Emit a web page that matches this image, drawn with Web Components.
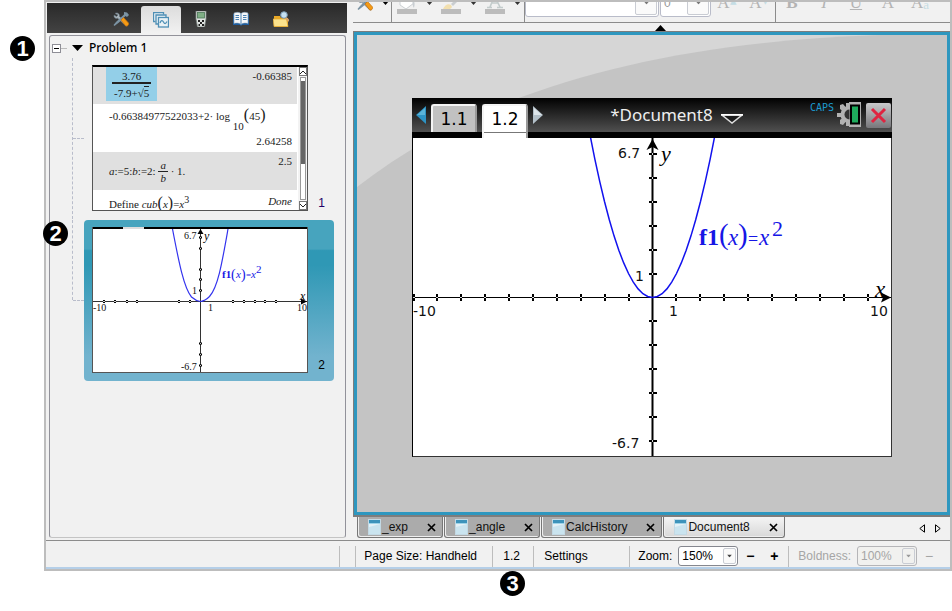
<!DOCTYPE html>
<html lang="en">
<head>
<meta charset="utf-8">
<title>Document workspace</title>
<style>
  html, body { height: 100%; margin: 0; }
  body { background: #fff; color: #000; font: 12px/16px "Liberation Sans", Arial, sans-serif; }
</style>
</head>
<body>
<doc-app></doc-app>
<script>
const define = (name, html, after) => {
  const t = document.createElement('template');
  t.innerHTML = html;
  customElements.define(name, class extends HTMLElement {
    connectedCallback() {
      if (this.shadowRoot) return;
      this.attachShadow({ mode: 'open' }).append(t.content.cloneNode(true));
      if (after) after(this, this.shadowRoot);
    }
  });
};

/* ---------- icons ---------- */
const page = `<rect x=".5" y=".5" width="12" height="15" fill="#e4f1f7" stroke="#c3d9e4"/><path d="M1 1h11v3H1z" fill="#3d93bb"/><path d="M1 4h11v1H1z" fill="#9ed3e8"/><path d="M1 8 12 5v10H1z" fill="#b9dcea" opacity=".6"/>`;
const tools = `<path d="M2 2.5c2-1.5 5 0 4.500 3l8.500 8-1.800 1.800-8.500-8C2.500 8 .5 6.500 1 4l2.500 1.500L5 4z" fill="#a9b4bb" stroke="#5f6f7a" stroke-width=".6"/><path d="m11 1 3 .6L16 4l-2 2-1.500-1L6 11.500 4 13l-2.500 2-1-1L3 11l1-1L11 3.500z" fill="#7b93a3"/><path d="m8 9 2.500-2.500 5 5.500c.8 1.500-1.200 4-3 2.800z" fill="#f59a14" stroke="#c36f09" stroke-width=".7"/>`;
const icons = {
  tools: [16, 16, tools],
  sorter: [16, 16, `<g fill="#e9f1f5" stroke="#4f8fb5" stroke-width="1.300"><path d="M10.500 2.500v-2h-10v9h2"/><path d="M13 5V3H3v9h2"/><rect x="5.500" y="5.500" width="10" height="9.500"/><path d="M7 11c1-3 2.500-3 3.500-1s2 2.500 3.500-.5" fill="none"/></g>`],
  handheld: [16, 16, `<path d="M3 0h10v8l-1.500 8h-7L3 8z" fill="#dfe3e1" stroke="#7c8580" stroke-width=".8"/><rect x="4.500" y="1.500" width="7" height="5.500" fill="#7fae85" stroke="#4d7757" stroke-width=".8"/><path d="M5 9h2v2H5zm4 0h2v2H9zm-2 2h2v2H7zm-1.500 2h1.500v2H5.500zm3.500 0h2v2H9z" fill="#222"/>`],
  book: [16, 16, `<path d="M0 3h16v11H9l-1 1-1-1H0z" fill="#1d5da0"/><path d="M1 2c3-1 5-1 7 .5C10 1 13 1 15 2v10.500c-3-.7-5-.5-7 1-2-1.500-4-1.700-7-1z" fill="#f5f7f9" stroke="#7d9ab3" stroke-width=".6"/><path d="M8 2.500v11M2.500 4.500h3.500M2.500 6.500h3.500M2.500 8.500h3.500M10 4.500h3.500M10 6.500h3.500M10 8.500h3.500" stroke="#4c83b3" fill="none"/>`],
  folder: [16, 16, `<path d="M1 5h6l1 2h7v9H1z" fill="#e8a826"/><path d="M0 8h13.500l1.500 7.500H1z" fill="#fbe28c" stroke="#e0a62e" stroke-width=".7"/><circle cx="11" cy="4" r="3.300" fill="#c5e0f2" stroke="#7896ae"/><path d="m13 7 3 3" stroke="#d7a26b" stroke-width="2"/>`],
  fill: [20, 16, `<path d="m3 3 8-4 6 6-8 6-6-4z" fill="#fff" stroke="#ccd0d3"/><path d="M15 2c3 1 3 4 2 8-2-3-1-5-2-8z" fill="#c9ced2"/><path d="M0 11h20v5H0z" fill="#bcbcbc"/>`],
  brush: [20, 16, `<path d="M10 6 16 0h4l-8 8z" fill="#c9cdd0"/><path d="M2 11c2-4 5-6 8-4l1 2c-2 3-5 3-9 2z" fill="#f2dfae"/><path d="M0 11h20v5H0z" fill="#bcbcbc"/>`],
  colour: [20, 16, `<path d="M0 11h20v5H0z" fill="#bcbcbc"/><path d="M2 9.500h5M12 9.500h6M5 9 9.500-2 15 9M6.500 5h7" fill="none" stroke="#c3cccc" stroke-width="1.600"/>`],
  down: [7, 4, `<path d="M0 0h7L3.500 4z" fill="currentColor"/>`],
  up: [11, 6, `<path d="M5.500 0 11 6H0z" fill="currentColor"/>`],
  page: [13, 16, page],
  close: [9, 9, `<path d="m1 1 7 7M8 1 1 8" stroke="#000" stroke-width="1.700"/>`],
  prev: [6, 9, `<path d="M5.500 .8v7.400L.8 4.500z" fill="none" stroke="#000"/>`],
  next: [6, 9, `<path d="M.5 .8v7.400l4.700-3.700z" fill="none" stroke="#000"/>`],
  left: [10, 18, `<path d="M10 0v18L0 9z" fill="#2e93c4"/><path d="M9 2v7H1z" fill="#5bb3d8"/>`],
  right: [10, 18, `<path d="M0 0v18l10-9z" fill="#b3c0c9"/><path d="M1 2v7h8z" fill="#dde5ea"/>`],
  menu: [22, 11, `<path d="M1 1h20l-10 8z" fill="#1b1b1b" stroke="#ddd" stroke-width="1.500"/><path d="M0 .8h22" stroke="#fff" stroke-width="1.600"/>`],
  gear: [24, 25, `<g fill="#b2b2b2"><path d="M9 1h4v23H9zM0 11h6v4H0zM3 3l3-1 5 6-3 3-5-4zM3 22l3 1 5-6-3-3-5 4z"/><circle cx="12" cy="12.500" r="8.500"/><path d="M12 0h12v25H12z"/></g><path d="M12.500 7.500a5 5 0 0 0 0 10z" fill="#333"/><rect x="14" y="3.500" width="8" height="18" fill="#1eab5c" stroke="#000" stroke-width="2"/>`],
  exit: [25, 25, `<defs><linearGradient id="g" x2="0" y2="1"><stop stop-color="#c9c9cb"/><stop offset="1" stop-color="#77777b"/></linearGradient></defs><rect width="25" height="25" rx="2" fill="url(#g)"/><path d="m6 6 13 13M19 6 6 19" stroke="#df2440" stroke-width="3"/>`]
};
define('ui-icon', `<style>:host{display:block;flex:none}svg{display:block}</style>`, (el, root) => {
  const [w, h, body] = icons[el.getAttribute('name')];
  root.innerHTML += `<svg width="${w}" height="${h}" viewBox="0 0 ${w} ${h}" aria-hidden="true">${body}</svg>`;
});

/* ---------- numbered callout ---------- */
define('note-badge', `<style>
  :host{position:absolute;width:25px;height:25px;border-radius:50%;background:#000;color:#fff;
    font:bold 22px/25px "Liberation Sans",sans-serif;text-align:center;z-index:2}
</style><slot></slot>`);

/* ---------- combo box ---------- */
define('combo-box', `<style>
  :host{display:block;position:relative;width:60px;color:#000}
  select{appearance:none;display:block;width:100%;height:20px;box-sizing:border-box;margin:0;padding:0 18px 0 3px;
    font:inherit;color:inherit;background:#fff;border:1px solid #85878f;border-radius:3px;opacity:1}
  span{position:absolute;right:2px;top:2px;bottom:2px;width:13px;box-sizing:border-box;border:1px solid #c9ccd3;border-radius:2px;
    display:grid;place-items:center;background:#fafafa;pointer-events:none;color:#444}
  ui-icon{transform:scale(.7)}
  :host([off]){color:#a5a5a5}
  :host([off]) select{background:#f1f1ef;border-color:#b5b5b8}
  :host([off]) span{background:#f1f1ef;color:#999}
  :host([bar]) select{height:30px;padding-top:1px;border-color:#b9bcc9;color:#999}
  :host([bar]) span{width:22px;padding-top:2px;color:#777}
</style><select></select><span><ui-icon name="down"></ui-icon></span>`, (el, root) => {
  const s = root.querySelector('select');
  s.setAttribute('aria-label', el.getAttribute('label'));
  s.add(new Option(el.getAttribute('value') || ''));
  s.disabled = el.hasAttribute('off');
});

/* ---------- formatting bar ---------- */
define('format-bar', `<style>
  :host{display:flex;align-items:flex-end;height:20px;overflow:hidden;border-bottom:1px solid #8c8c8c;background:#f1f1f1;padding-right:14px}
  button{border:0;background:none;padding:0;margin:0;flex:none;display:flex;align-items:flex-end;font:17px/20px "Liberation Serif",serif;color:#b4b4b4}
  .split{width:44px;padding:0 0 8px 5px;gap:9px;box-sizing:border-box;color:#333}
  .split ui-icon+ui-icon{padding-bottom:9px}
  .first{width:38px;padding:0 0 11px 4px;color:#000;gap:9px}
  .first ui-icon+ui-icon{padding-bottom:6px}
  i{flex:none;width:1px;height:20px;background:#8c8c8c}
  .t{width:32px;justify-content:center;padding-bottom:9px}
  .b{font-weight:700}
  .it{font-style:italic}.u{text-decoration:underline}
  small{font-size:13px;line-height:16px;color:#c5dde4}
  .sup{align-items:flex-start}
  .font{flex:1;min-width:40px;margin-bottom:5px}
  .size{flex:none;width:51px;margin:0 0 5px 1px}
</style>
<button class="split first" aria-label="Tools"><ui-icon name="tools"></ui-icon><ui-icon name="down"></ui-icon></button><i></i>
<button class="split" aria-label="Fill"><ui-icon name="fill"></ui-icon><ui-icon name="down"></ui-icon></button>
<button class="split" aria-label="Line"><ui-icon name="brush"></ui-icon><ui-icon name="down"></ui-icon></button>
<button class="split" aria-label="Text colour"><ui-icon name="colour"></ui-icon><ui-icon name="down"></ui-icon></button><i></i>
<combo-box class="font" bar label="Font"></combo-box>
<combo-box class="size" bar label="Font size" value="0"></combo-box>
<button class="t sup">A<small>▴</small></button><button class="t sup">A<small>▾</small></button><i></i>
<button class="t b">B</button><button class="t it">I</button><button class="t u">U</button><button class="t">A</button><button class="t">A<small>a</small></button>`);

/* ---------- calculator page preview ---------- */
define('calc-preview', `<style>
  :host{display:flex;flex:none;box-sizing:border-box;width:216px;height:146px;border:1px solid #555;border-top:2px solid #000;background:#fff;
    font:11px/12px "Liberation Serif",serif;color:#1a1a1a;overflow:hidden}
  .rows{flex:1;min-width:0;display:grid;grid-template-rows:37px 48px 38px 20px}
  .row{display:flex;justify-content:space-between;padding:0 5px 0 16px;position:relative}
  .row:nth-child(odd){background:#e0e0e0}
  .out{padding-top:3px}
  .two{flex-direction:column;padding-top:5px;padding-bottom:5px}
  .two .out{align-self:flex-end}
  .frac{display:inline-flex;flex-direction:column;align-items:center;text-align:center}
  .frac>:first-child{border-bottom:1px solid #222;padding:0 2px}
  .sel{background:#93cfe8;margin-left:-3px;padding:3px 6px 0;height:31px}
  .sel>:first-child{border-bottom-width:2px;padding:0 10px}
  .sel>:last-child{padding-top:3px}
  .rt{border-top:1px solid #222}
  .expr{display:flex;align-items:center}
  sub{font-size:11px;line-height:0;vertical-align:-10px}
  sup{font-size:10px;line-height:0;vertical-align:5px}
  big{font-size:16px;line-height:12px}
  .def{padding-top:7px;white-space:nowrap}
  .done{padding-top:5px}
  .bar{width:9px;border-left:1px solid #fff;display:flex;flex-direction:column;align-items:center;background:#f3f3f3}
  .bar b{box-sizing:border-box;width:8px;height:9px;border:1px solid #777;display:grid;place-items:center;background:#fff}
  .bar b svg{display:block}
  .track{flex:1;width:6px;border:1px solid #999;box-sizing:border-box;background:#fff;margin:1px 0;padding-top:3px}
  .track div{height:70%;background:#666}
</style>
<div class="rows">
  <div class="row"><span class="frac sel"><span>3.76</span><span>-7.9+√<span class="rt">5</span></span></span><span class="out">-0.66385</span></div>
  <div class="row two"><span>-0.66384977522033+2· log <sub>10</sub><big>(</big>45<big>)</big></span><span class="out">2.64258</span></div>
  <div class="row"><span class="expr"><i>a</i>:=5:<i>b</i>:=2:&nbsp;<span class="frac"><i>a</i><i>b</i></span>&nbsp;· 1.</span><span class="out">2.5</span></div>
  <div class="row"><span class="def">Define <i>cub</i><big>(</big><i>x</i><big>)</big>=<i>x</i><sup>3</sup></span><i class="done">Done</i></div>
</div>
<div class="bar"><b><svg width="6" height="4"><path d="M0 4 3 1l3 3" fill="none" stroke="#222"/></svg></b><div class="track"><div></div></div><b><svg width="6" height="4"><path d="m0 0 3 3 3-3" fill="none" stroke="#222"/></svg></b></div>`);

/* ---------- graph ---------- */
const num = 'font-family="DejaVu Sans,sans-serif"';
const math = (x, y, s) => `<text x="${x}" y="${y}" font-family="Liberation Serif,serif" font-size="${s}"`;
define('graph-plot', `<style>:host{display:block}svg{display:block;width:100%;height:auto}</style>`, (el, root) => {
  const mini = el.hasAttribute('mini');
  let out = '';
  if (mini) {
    const xs = [11, 22, 34, 44, 86, 97, 140, 151, 162, 172, 183], ys = [8, 19, 40, 50, 61, 114, 125, 136];
    out = `<svg viewBox="0 0 214 143"><path d="M0 72.500h214M107.500 0v143" stroke="#333"/>`;
    xs.forEach(x => out += `<path d="M${x - 1} 72.500h2" stroke="#000" stroke-width="3"/><path d="M${x - 1} 72.500h2" stroke="#ccc"/>`);
    ys.forEach(y => out += `<path d="M106 ${y}.500h3" stroke="#000" stroke-width="2"/><path d="M107 ${y}.500h1" stroke="#ccc"/>`);
    out += `<path d="m107.500 0-3 5h6z"/><path d="m214 72.500-6-3v6z"/>
      <path d="M79.500 0C86 34 91 59 98.500 68Q103 72 107.500 72.500Q112 72 116.500 67.500C125 58 129 34 135 0" fill="none" stroke="#33e" stroke-width="1.200"/>
      <g fill="#111" font-family="Liberation Serif,serif" font-size="10"><text x="91" y="10">6.7</text><text x="99" y="65">1</text><text x="0" y="82">-10</text><text x="115" y="82">1</text><text x="204" y="82">10</text><text x="88" y="141">-6.7</text></g>
      ${math(111, 11, 12)} font-style="italic">y</text>${math(207, 71, 12)} font-style="italic">x</text>
      <g fill="#1616e6">${math(129, 49, 11)} font-weight="bold">f1</text>${math(138, 50, 14)}>(</text>${math(143, 49, 11)} font-style="italic">x</text>${math(148, 50, 14)}>)</text>${math(153, 49, 9)}>=</text>${math(158, 49, 11)} font-style="italic">x</text>${math(163, 44, 11)}>2</text></g></svg>`;
  } else {
    out = `<svg viewBox="0 0 478 318"><path d="M0 159.500h478" stroke="#000"/><path d="M239.500 0v318" stroke="#000" stroke-width="2"/>`;
    for (let i = -10; i < 10; i++) if (i) { const x = Math.round(239.500 + i * 23.900); out += `<path d="M${x} 156v7" stroke="#000" stroke-width="2"/><path d="M${x - 1} 159.500h2" stroke="#ddd"/>`; }
    for (let i = -6; i < 7; i++) if (i) { const y = Math.round(159.500 + i * 23.900); out += `<path d="M236 ${y}h8" stroke="#000" stroke-width="2"/><path d="M239.500 ${y - 1}v2" stroke="#ddd"/>`; }
    let d = '';
    for (let x = -2.600; x <= 2.610; x += .2) d += `${d ? 'L' : 'M'}${(239.500 + x * 24).toFixed(1)} ${(159.500 - x * x * 24).toFixed(1)}`;
    out += `<path d="m239.500 1-6 11 6-3 6 3z"/><path d="m478 159.500-10-5 2 5-2 5z"/>
      <path d="${d}" fill="none" stroke="#1212ee" stroke-width="1.500"/>
      <g ${num} font-size="14" fill="#111"><text x="205" y="20">6.7</text><text x="222" y="143">1</text><text x="0" y="178">-10</text><text x="256" y="178">1</text><text x="457" y="178">10</text><text x="199" y="310">-6.7</text></g>
      ${math(248, 23, 22)} font-style="italic">y</text>${math(462, 159, 23)} font-style="italic">x</text>
      <g fill="#1616e6">${math(286, 107, 24)} font-weight="bold">f1</text>${math(306, 106, 29)}>(</text>${math(315, 107, 23)} font-style="italic">x</text>${math(325, 106, 29)}>)</text>${math(335, 107, 18)}>=</text>${math(346, 107, 23)} font-style="italic">x</text>${math(359, 98, 22)}>2</text></g></svg>`;
  }
  root.innerHTML += out;
});
define('graph-preview', `<style>
  :host{display:block;flex:none;box-sizing:border-box;width:216px;height:146px;border:1px solid #555;border-top:0;background:#fff}
  header{height:2px;background:#000;display:flex;padding-left:30px}
  header i{width:21px;background:#ddd}
</style><header><i></i></header><graph-plot mini></graph-plot>`);

/* ---------- page sorter ---------- */
define('page-card', `<style>
  :host{display:flex;align-items:flex-end;justify-content:space-between;gap:8px;padding:7px 9px 8px 8px;border-radius:4px}
  :host([selected]){background:linear-gradient(#47a4be 0 18%,#2f98b5 19%,#2f98b5 28%,#72b3ce 85%)}
  span{color:#206;line-height:16px}
  :host([selected]) span{color:#000}
</style><slot></slot><span></span>`, (el, root) => root.querySelector('span').textContent = el.getAttribute('number'));

define('page-sorter', `<style>
  :host{display:flex;flex-direction:column;box-sizing:border-box;gap:2px;padding:1px 6px 2px 1px;min-height:0}
  nav{display:flex;justify-content:center;height:30px;padding-left:8px;background:linear-gradient(#292929,#434343)}
  nav button{width:40px;border:0;background:none;display:grid;place-items:center;padding:0;padding-top:2px}
  nav .on{background:linear-gradient(#dcdcdc,#f1f1f1);border-radius:3px 3px 0 0;margin-top:3px;padding-top:0}
  section{flex:1;min-height:0;margin:0 1px 0 2px;border:1px solid #92929a;border-bottom-color:#c4c4c4;border-radius:3px;background:#f1f1f1;overflow:hidden}
  h2{display:flex;align-items:center;margin:0;padding:4px 0 0 2px;font:500 12px/16px "Noto Sans",sans-serif}
  h2 b{width:7px;height:7px;border:1px solid #8e8e96;background:#fff;display:grid;place-items:center}
  h2 b::after{content:"";width:5px;height:1px;background:#000}
  h2 i{width:6px;border-top:1px dashed #bbb;margin-right:5px}
  h2 svg{margin-right:6px}
  .tree{display:grid;grid-template-columns:12px 250px;padding:2px 10px 0 22px;row-gap:1px}
  .link{border-left:1px dashed #b9bdcb;position:relative}
  .link::after{content:"";display:block;height:80px;border-bottom:1px dashed #b9bdcb;width:11px}
  .last{height:80px}
</style>
<nav aria-label="Workspace views">
  <button aria-label="Document tools"><ui-icon name="tools"></ui-icon></button><button class="on" aria-label="Page sorter"><ui-icon name="sorter"></ui-icon></button><button aria-label="Handheld"><ui-icon name="handheld"></ui-icon></button><button aria-label="Utilities"><ui-icon name="book"></ui-icon></button><button aria-label="Content explorer"><ui-icon name="folder"></ui-icon></button>
</nav>
<section>
  <h2><b></b><i></i><svg width="11" height="6"><path d="M0 0h11L5.500 6z"/></svg>Problem 1</h2>
  <div class="tree">
    <div class="link"></div><page-card number="1"><calc-preview></calc-preview></page-card>
    <div class="link last"></div><page-card number="2" selected><graph-preview></graph-preview></page-card>
  </div>
</section>`);

/* ---------- handheld screen ---------- */
define('handheld-screen', `<style>
  :host{display:block;width:min(100%,480px);background:#fff}
  header{display:flex;align-items:flex-start;height:34px;background:linear-gradient(#000,#111 20%,#505050);border-bottom:6px solid #000;color:#fff}
  header>ui-icon{padding-top:8px}
  .tabs{display:flex;gap:5px;padding:0 5px}
  .tabs button{width:46px;height:28px;margin-top:6px;box-sizing:border-box;border:2px solid #f4f4f4;border-right-color:#999;border-bottom:0;border-radius:3px 3px 0 0;background:#c1c1c1;
    padding:0;font:17px/22px "DejaVu Sans",sans-serif;color:#000}
  .tabs .on{background:linear-gradient(#fff 0 26px,#777 26px 27px,#fff 27px);height:34px;padding-bottom:6px}
  .title{margin:0 auto;display:flex;align-items:center;gap:8px;border:0;background:none;padding:5px 0 0;color:#eee;font:17px/24px "Noto Sans",sans-serif}
  .title ui-icon{padding-top:8px}
  .caps{font:10px/12px "DejaVu Sans Mono",monospace;color:#1c9ad0;padding:4px 3px 0 0}
  header button.x{border:0;background:none;padding:5px 1px 0 5px}
  header ui-icon.gear{padding-top:4px}
  header ui-icon.l{padding-left:4px}
  graph-plot{border:1px solid #333;border-left:1px solid #000;border-top:0}
</style>
<header><ui-icon class="l" name="left"></ui-icon><div class="tabs"><button>1.1</button><button class="on">1.2</button></div><ui-icon name="right"></ui-icon>
<button class="title">*Document8<ui-icon name="menu"></ui-icon></button>
<span class="caps">CAPS</span><ui-icon class="gear" name="gear"></ui-icon><button class="x" aria-label="Close"><ui-icon name="exit"></ui-icon></button></header>
<graph-plot></graph-plot>`);

/* ---------- work area ---------- */
define('work-area', `<style>
  :host{flex:1;min-height:0;display:grid;border:1px solid #7d7d7d;border-right:0;border-bottom-width:2px}
  main{display:grid;grid-template:minmax(0,1fr)/minmax(0,1fr);border:3px solid #2e97bf;background:#d6d6d6;min-height:0}
  .back{grid-area:1/1;width:100%;height:100%;display:block}
  .front{grid-area:1/1;display:grid;place-items:center;padding-top:8px;z-index:1;min-height:0}
</style><main><svg class="back" viewBox="0 0 590 477" preserveAspectRatio="none"><path d="M0 152C123 55 303 7 523 0H590V477H0z" fill="#c4c4c4"/></svg><div class="front"><slot></slot></div></main>`);

/* ---------- document tabs ---------- */
define('doc-tab', `<style>
  :host{display:flex;align-items:center;box-sizing:border-box;height:21px;padding:0 6px 0 10px;gap:1px;background:#ababab;border:1px solid #777;border-top:0;border-radius:0 0 3px 3px;box-shadow:inset 1px -1px #eee}
  :host([on]){background:linear-gradient(#f4f4f4,#d8d8d8)}
  button{border:0;background:none;padding:0;margin:0;font:inherit;color:#111}
  .name{display:flex;align-items:center;gap:1px}
  .x{margin-left:18px}
</style><button class="name"><ui-icon name="page"></ui-icon><slot></slot></button><button class="x" aria-label="Close"><ui-icon name="close"></ui-icon></button>`);
define('doc-tabs', `<style>
  :host{display:flex;align-items:flex-start;gap:1px;padding:0 9px 2px 4px}
  .nav{margin-left:auto;display:flex;gap:10px;padding-top:7px}
  .nav button{border:0;background:none;padding:0}
</style><doc-tab>_exp</doc-tab><doc-tab>_angle</doc-tab><doc-tab>CalcHistory</doc-tab><doc-tab on>Document8</doc-tab>
<div class="nav"><button aria-label="Previous"><ui-icon name="prev"></ui-icon></button><button aria-label="Next"><ui-icon name="next"></ui-icon></button></div>`);

/* ---------- status bar ---------- */
define('status-bar', `<style>
  :host{display:flex;justify-content:flex-end;align-items:flex-end;height:26px;border-top:1px solid #8c8c8c;border-bottom:2px solid #b5cfe8;padding-right:17px;overflow:hidden}
  div{display:flex;align-items:center;height:21px;border-left:1px solid #bdbdbd;padding:0 0 2px 9px;box-sizing:border-box;white-space:nowrap}
  .gap{width:16px;padding:0}.size{width:137px;padding-left:8px}.page{width:41px;padding-left:10px}.set{width:96px;padding-left:10px}.zoom{width:159px;padding-left:8px}
  .off{color:#a5a5a5}
  button{border:0;background:none;padding:0;margin:0;font:inherit;color:inherit}
  combo-box{margin-left:6px}
  .step{font:bold 14px/16px "Liberation Sans",sans-serif;width:8px;margin-left:8px}
  .step+.step{margin-left:16px}
  .off .step{font-weight:400}
</style>
<div class="gap"></div><div class="size">Page Size: Handheld</div><div class="page">1.2</div><div class="set"><button>Settings</button></div>
<div class="zoom">Zoom:<combo-box label="Zoom" value="150%"></combo-box><button class="step">−</button><button class="step">+</button></div>
<div class="off">Boldness:<combo-box off label="Boldness" value="100%"></combo-box><button class="step" disabled>−</button></div>`);

/* ---------- application ---------- */
define('doc-app', `<style>
  :host{display:block;box-sizing:border-box;height:100vh;padding:0 0 40px 44px;position:relative}
  .frame{box-sizing:border-box;height:100%;border:2px solid #bdbdbd;background:#f1f1f1;display:grid;grid-template-rows:minmax(0,1fr) auto}
  .body{display:grid;grid-template-columns:307px minmax(0,1fr);min-height:0}
  .right{display:flex;flex-direction:column;min-height:0;min-width:0}
  .fold{border:0;background:none;padding:2px 0 0;height:8px;margin-left:17px;display:flex;justify-content:center;align-items:flex-start;color:#000}
  .n1{left:10px;top:36px}.n2{left:43px;top:221px}.n3{left:500px;top:571px}
</style>
<div class="frame"><div class="body"><page-sorter></page-sorter>
<div class="right"><format-bar></format-bar><button class="fold" aria-label="Collapse toolbar"><ui-icon name="up"></ui-icon></button>
<work-area><handheld-screen></handheld-screen></work-area><doc-tabs></doc-tabs></div></div>
<status-bar></status-bar></div>
<note-badge class="n1">1</note-badge><note-badge class="n2">2</note-badge><note-badge class="n3">3</note-badge>`);
</script>
</body>
</html>
